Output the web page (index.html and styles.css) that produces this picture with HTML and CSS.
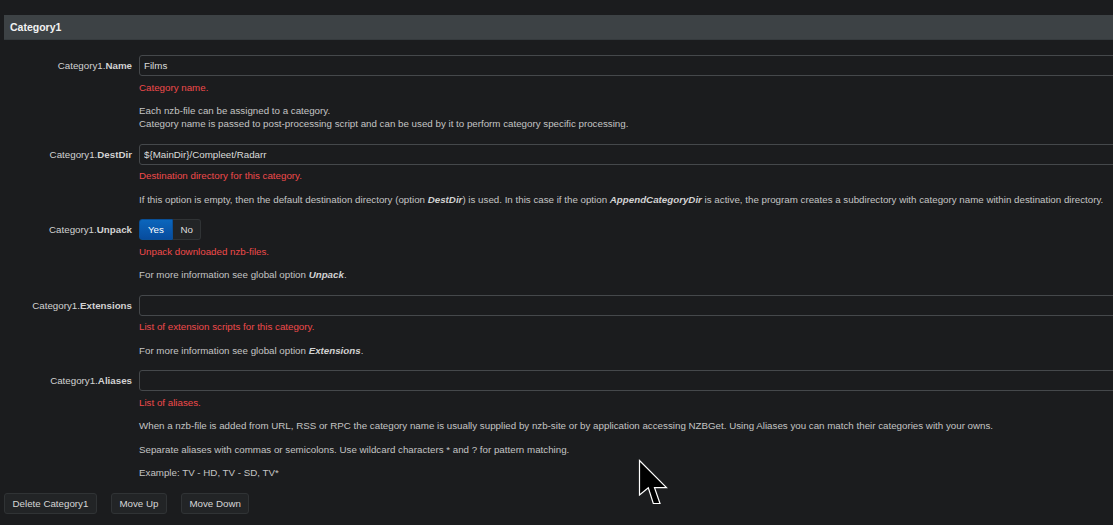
FILE: index.html
```html
<!DOCTYPE html>
<html>
<head>
<meta charset="utf-8">
<link rel="stylesheet" href="styles.css">
</head>
<body>
<div class="page">
  <div class="section-head">Category1</div>
  <div class="rows">
    <div class="row">
      <label class="lbl">Category1.<b>Name</b></label>
      <div class="field">
        <input class="txt" type="text" value="Films">
        <p class="help">Category name.</p>
        <p class="desc">Each nzb-file can be assigned to a category.<br>Category name is passed to post-processing script and can be used by it to perform category specific processing.</p>
      </div>
    </div>
    <div class="row">
      <label class="lbl">Category1.<b>DestDir</b></label>
      <div class="field">
        <input class="txt" type="text" value="${MainDir}/Compleet/Radarr">
        <p class="help">Destination directory for this category.</p>
        <p class="desc">If this option is empty, then the default destination directory (option <b><i>DestDir</i></b>) is used. In this case if the option <b><i>AppendCategoryDir</i></b> is active, the program creates a subdirectory with category name within destination directory.</p>
      </div>
    </div>
    <div class="row">
      <label class="lbl">Category1.<b>Unpack</b></label>
      <div class="field">
        <div class="toggle"><span class="tbtn on">Yes</span><span class="tbtn">No</span></div>
        <p class="help">Unpack downloaded nzb-files.</p>
        <p class="desc">For more information see global option <b><i>Unpack</i></b>.</p>
      </div>
    </div>
    <div class="row">
      <label class="lbl">Category1.<b>Extensions</b></label>
      <div class="field">
        <input class="txt" type="text" value="">
        <p class="help">List of extension scripts for this category.</p>
        <p class="desc">For more information see global option <b><i>Extensions</i></b>.</p>
      </div>
    </div>
    <div class="row">
      <label class="lbl">Category1.<b>Aliases</b></label>
      <div class="field">
        <input class="txt" type="text" value="">
        <p class="help">List of aliases.</p>
        <p class="desc">When a nzb-file is added from URL, RSS or RPC the category name is usually supplied by nzb-site or by application accessing NZBGet. Using Aliases you can match their categories with your owns.</p>
        <p class="desc">Separate aliases with commas or semicolons. Use wildcard characters * and ? for pattern matching.</p>
        <p class="desc">Example: TV - HD, TV - SD, TV*</p>
      </div>
    </div>
  </div>
  <div class="actions">
    <button class="btn">Delete Category1</button>
    <button class="btn">Move Up</button>
    <button class="btn">Move Down</button>
  </div>
</div>
<svg class="cursor" width="31" height="47" viewBox="0 0 31 47">
  <polygon points="1.5,1.5 1.5,36 10.3,28.7 15.3,44.5 22,44.5 16.5,28.7 28.5,28.7" fill="#000" stroke="#fff" stroke-width="1.2" stroke-linejoin="miter"/>
</svg>
</body>
</html>
```
FILE: styles.css
```css
html, body {
  margin: 0;
  padding: 0;
  overflow: hidden;
  background: #1b1c1e;
}
body {
  font-family: "Liberation Sans", Arial, sans-serif;
  font-size: 9.75px;
  line-height: 13px;
  color: #cfcfcf;
  position: relative;
  height: 525px;
}
.page {
  padding: 15px 0 0 4px;
  width: 1140px;
}
.section-head {
  height: 24px;
  line-height: 24px;
  background: #3d4245;
  border-bottom: 1px solid #363b3e;
  padding-left: 6px;
  font-weight: bold;
  font-size: 10.5px;
  color: #f2f2f2;
}
.rows {
  margin-top: 15px;
}
.row {
  display: grid;
  grid-template-columns: 135px 1fr;
  margin-bottom: 13.5px;
}
.lbl {
  text-align: right;
  padding-right: 7px;
  line-height: 21px;
  color: #d2d2d2;
}
.lbl b {
  font-weight: bold;
}
.field {
  min-width: 0;
}
.txt {
  display: block;
  box-sizing: border-box;
  width: 100%;
  height: 21px;
  margin: 0;
  padding: 0 4px;
  border: 1px solid #45484b;
  border-radius: 3px;
  background: #1b1c1e;
  color: #dcdcdc;
  font-family: "Liberation Sans", Arial, sans-serif;
  font-size: 9.75px;
}
.help {
  margin: 4.5px 0 0;
  color: #ef4a4b;
}
.desc {
  margin: 10.5px 0 0;
  color: #c4c4c4;
}
.desc b {
  color: #d2d2d2;
}
.toggle {
  display: inline-flex;
  height: 21px;
}
.tbtn {
  box-sizing: border-box;
  height: 21px;
  line-height: 19px;
  padding: 0 8px;
  border: 1px solid #303335;
  background: #222426;
  color: #dddddd;
}
.tbtn:first-child {
  border-radius: 3px 0 0 3px;
}
.tbtn:last-child {
  border-radius: 0 3px 3px 0;
  border-left: 0;
  padding: 0 7.5px;
}
.tbtn.on {
  background: linear-gradient(#0b66bc, #084c9e);
  border-color: #0a4f96;
  color: #ffffff;
}
.actions {
  display: flex;
  gap: 14px;
}
.btn {
  box-sizing: border-box;
  height: 21px;
  padding: 0 7.5px;
  border: 1px solid #303335;
  border-radius: 3px;
  background: #222426;
  color: #d6d6d6;
  font-family: "Liberation Sans", Arial, sans-serif;
  font-size: 9.75px;
}
.cursor {
  position: absolute;
  left: 638px;
  top: 459px;
}
```
